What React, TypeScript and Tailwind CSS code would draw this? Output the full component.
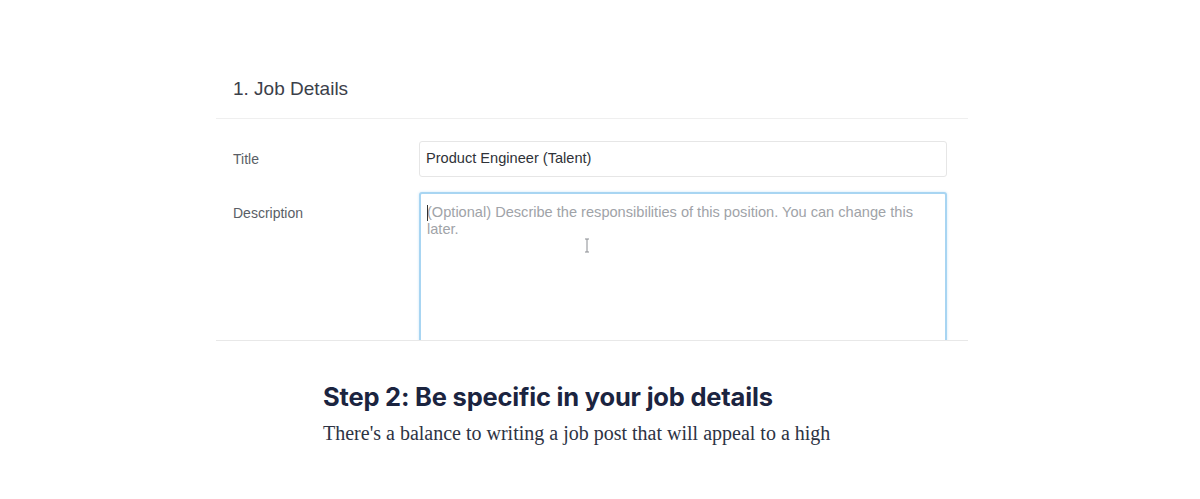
export default function App() {
  return (
    <div className="min-h-[499px] w-full bg-white">
      {/* screenshot of the job form */}
      <div className="ml-[216px] h-[341px] w-[752px] overflow-hidden border-b border-[#e8e8e8] bg-white font-['Liberation_Sans',Arial,sans-serif]">
        <div className="h-[119px] border-b border-[#efefef] pl-[17px] pt-[78px]">
          <h2 className="text-[19px] leading-[22px] text-[#3b404a]">1. Job Details</h2>
        </div>

        <div className="flex flex-col gap-[15px] pt-[22px] pl-[17px] pr-[21px]">
          <div className="flex items-center">
            <label className="w-[186px] text-[14px] text-[#5a5e66]">Title</label>
            <div className="flex h-[36px] flex-1 items-center rounded-[3px] border border-[#e6e6e6] bg-white px-[6px] text-[14.6px] text-[#2f3238]">
              Product Engineer (Talent)
            </div>
          </div>

          <div className="flex items-start">
            <label className="w-[186px] pt-[11px] text-[14px] text-[#5a5e66]">Description</label>
            <div className="relative h-[200px] flex-1 rounded-[3px] border-2 border-[#a8d5f2] bg-white px-[6px] pt-[10px] text-[14.6px] leading-[17px] text-[#a0a3a8] shadow-[0_0_3px_#cfe8f9]">
              <span className="absolute left-[6px] top-[11px] h-[16px] w-px bg-[#333]" />
              (Optional) Describe the responsibilities of this position. You can change this later.
              {/* I-beam cursor */}
              <svg className="absolute left-[163px] top-[44px]" width="6" height="15" viewBox="0 0 6 15">
                <path d="M1 1h4M3 1v13M1 14h4" stroke="#8a8d92" strokeWidth="1" fill="none" />
              </svg>
            </div>
          </div>
        </div>
      </div>

      {/* article text */}
      <div className="pl-[323px] pt-[40px]">
        <h3 className="font-['Inter',sans-serif] text-[25.5px] leading-[32px] font-bold tracking-[-0.2px] text-[#1b2440]">
          Step 2: Be specific in your job details
        </h3>
        <p className="mt-[6px] font-['Liberation_Serif',Georgia,serif] text-[20px] leading-[28px] text-[#2d3344]">
          There's a balance to writing a job post that will appeal to a high
        </p>
      </div>
    </div>
  )
}
